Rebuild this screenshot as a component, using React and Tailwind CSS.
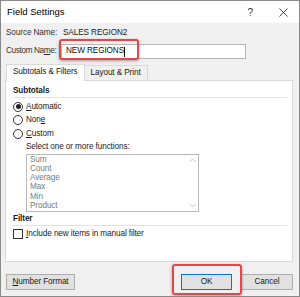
import React from 'react'

const font = { fontFamily: '"Liberation Sans", Arial, sans-serif' }

function U({ children }) {
  return <span className="underline underline-offset-[1px]">{children}</span>
}

function Radio({ checked, children }) {
  return (
    <div className="flex items-center h-[13.5px] gap-[3px]">
      <span className="w-[10px] h-[10px] rounded-full border border-[#333] bg-white flex items-center justify-center">
        {checked && <span className="w-[5px] h-[5px] rounded-full bg-[#222]" />}
      </span>
      <span>{children}</span>
    </div>
  )
}

function Section({ title }) {
  return (
    <div className="flex flex-col">
      <div className="font-bold leading-[12px]">{title}</div>
      <div className="h-px bg-[#e3e3e3] mr-[4px]" />
    </div>
  )
}

export default function App() {
  const fns = ['Sum', 'Count', 'Average', 'Max', 'Min', 'Product']
  return (
    <div
      className="relative w-[300px] h-[297px] bg-[#f0f0f0] border border-[#8a8a8a] flex flex-col text-[8.2px] tracking-[-0.1px] text-[#1a1a1a] overflow-hidden whitespace-nowrap"
      style={font}
    >
      {/* Title bar */}
      <div className="h-[22px] bg-white flex items-center pl-[6px] pr-[11px] shrink-0">
        <span className="text-[9.5px] tracking-normal text-black">Field Settings</span>
        <span className="ml-auto text-[10px] text-[#333] mr-[26px]">?</span>
        <svg width="9" height="9" viewBox="0 0 9 9" className="text-[#333]">
          <path d="M0.5 0.5L8.5 8.5M8.5 0.5L0.5 8.5" stroke="currentColor" strokeWidth="0.9" />
        </svg>
      </div>

      <div className="flex flex-col px-[4px]">
        {/* Source name */}
        <div className="flex items-center h-[14px] mt-[3px] pl-[1px]">
          <span className="w-[57px] shrink-0 text-[#333]">Source Name:</span>
          <span className="text-[#222]">SALES REGION2</span>
        </div>

        {/* Custom name */}
        <div className="flex items-center h-[15px] mt-[4px] pl-[1px]">
          <span className="w-[55px] shrink-0 text-[#333] tracking-[-0.35px]">
            Custom Na<U>m</U>e:
          </span>
          <div className="w-[185px] h-[15px] bg-white border border-[#b5b5b5] flex items-center pl-[4px] text-[#111]">
            NEW REGIONS<span className="w-px h-[10px] bg-black" />
          </div>
        </div>

        {/* Tabs */}
        <div className="flex items-end h-[17px] mt-[4px] pl-[1px]">
          <div className="h-[17px] px-[6px] bg-white border border-b-0 border-[#d9d9d9] flex items-center relative z-10 -mb-px pb-px">
            Subtotals &amp; Filters
          </div>
          <div className="h-[15px] px-[6px] bg-[#f0f0f0] border border-l-0 border-b-0 border-[#d9d9d9] flex items-center">
            Layout &amp; Print
          </div>
        </div>

        {/* Panel */}
        <div className="h-[182px] bg-white border border-[#d9d9d9] mr-[2px] flex flex-col pl-[7px] pr-[1px] pt-[4px]">
          <Section title="Subtotals" />
          <div className="flex flex-col mt-[2px]">
            <Radio checked>
              <U>A</U>utomatic
            </Radio>
            <Radio>
              Non<U>e</U>
            </Radio>
            <Radio>
              <U>C</U>ustom
            </Radio>
          </div>
          <div className="pl-[13px] flex flex-col">
            <div className="h-[13px] flex items-center">Select one or more functions:</div>
            <div className="w-[173px] h-[58px] border border-[#b9b9b9] bg-white flex text-[#7a7a7a]">
              <div className="flex-1 flex flex-col pl-[3px] leading-[9.3px]">
                {fns.map((f) => (
                  <span key={f}>{f}</span>
                ))}
              </div>
              <div className="w-[11px] flex flex-col justify-between items-center py-[3px]">
                <svg width="7" height="5" viewBox="0 0 7 5">
                  <path d="M0.5 4L3.5 1L6.5 4" fill="none" stroke="#c4c4c4" strokeWidth="1" />
                </svg>
                <svg width="7" height="5" viewBox="0 0 7 5">
                  <path d="M0.5 1L3.5 4L6.5 1" fill="none" stroke="#c4c4c4" strokeWidth="1" />
                </svg>
              </div>
            </div>
          </div>
          <div className="mt-[1px]">
            <Section title="Filter" />
          </div>
          <div className="flex items-center gap-[3px] mt-[2px]">
            <span className="w-[10px] h-[10px] border border-[#333] bg-white" />
            <span>
              <U>I</U>nclude new items in manual filter
            </span>
          </div>
        </div>

        {/* Buttons */}
        <div className="flex items-center mt-[12px] pl-[1px] pr-[2px]">
          <div className="w-[69px] h-[16px] border border-[#adadad] bg-[#e1e1e1] flex items-center justify-center">
            <U>N</U>umber Format
          </div>
          <div className="ml-auto w-[51px] h-[16px] border border-[#0078d7] bg-[#e1e1e1] flex items-center justify-center">
            OK
          </div>
          <div className="ml-[9px] w-[52px] h-[16px] border border-[#adadad] bg-[#e1e1e1] flex items-center justify-center">
            Cancel
          </div>
        </div>
      </div>

      {/* Highlight overlays */}
      <div className="absolute left-[58px] top-[38px] w-[80px] h-[21px] border-2 border-[#e2474c] rounded-[3px] shadow-[0_1px_3px_rgba(0,0,0,0.35)]" />
      <div className="absolute left-[171px] top-[263px] w-[70px] h-[31px] border-2 border-[#e2474c] rounded-[3px] shadow-[0_1px_3px_rgba(0,0,0,0.35)]" />
    </div>
  )
}
